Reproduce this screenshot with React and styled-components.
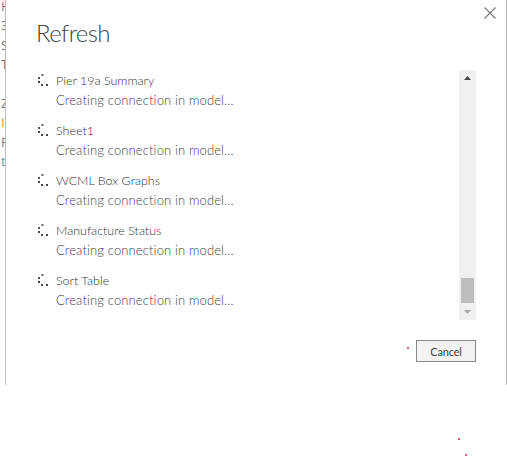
import React from "react";
import styled, { createGlobalStyle } from "styled-components";

const Global = createGlobalStyle`
  html, body { margin: 0; padding: 0; background: #fff; }
  body { font-family: "Lato", "Open Sans", sans-serif; }
`;

const Page = styled.div`
  position: relative;
  width: 507px;
  height: 456px;
  overflow: hidden;
  background: #fff;
`;

const BackgroundText = styled.div`
  position: absolute;
  left: 1px;
  top: -3px;
  width: 4px;
  overflow: hidden;
  font-family: "Open Sans", sans-serif;
  font-size: 13px;
  line-height: 19.4px;
`;

const BackLine = styled.div`
  height: 19.4px;
  color: ${(p) => p.$color || "#777"};
`;

const Dialog = styled.div`
  position: absolute;
  left: 5px;
  top: 0;
  width: 502px;
  height: 385px;
  box-sizing: border-box;
  border-left: 1px solid #bdbdbd;
  border-right: 1px solid #bdbdbd;
  background: #fff;
  padding: 16px 30px 0 30px;
  display: flex;
  flex-direction: column;
`;

const Title = styled.h1`
  margin: 0;
  font-weight: 300;
  font-size: 24px;
  letter-spacing: -0.6px;
  line-height: 34px;
  color: #444;
`;

const Close = styled.button`
  position: absolute;
  right: 10px;
  top: 7px;
  width: 12px;
  height: 12px;
  padding: 0;
  border: 0;
  background: none;
  display: block;
`;

const Glyph = styled.svg`
  display: block;
`;

const ListArea = styled.div`
  margin-top: 20px;
  display: flex;
  height: 250px;
`;

const List = styled.div`
  width: 424px;
  display: flex;
  flex-direction: column;
`;

const Item = styled.div`
  height: 50px;
  display: grid;
  grid-template-columns: 20px 1fr;
  grid-template-rows: 20px 20px;
  align-items: center;
`;

const SpinnerBox = styled.div`
  grid-row: 1;
  width: 12px;
  height: 12px;
`;

const Name = styled.div`
  font-size: 12.5px;
  font-weight: 300;
  color: #333;
  white-space: nowrap;
`;

const Status = styled.div`
  grid-column: 2;
  font-size: 13px;
  letter-spacing: 0.13px;
  font-weight: 300;
  color: #444;
  white-space: nowrap;
`;

const Track = styled.div`
  width: 17px;
  height: 250px;
  background: #f0f0f0;
  display: flex;
  flex-direction: column;
  align-items: center;
  justify-content: space-between;
  position: relative;
`;

const Arrow = styled.svg`
  width: 7px;
  height: 4px;
  display: block;
  margin: 6px 0;
`;

const Thumb = styled.div`
  position: absolute;
  left: 2px;
  right: 2px;
  top: 208px;
  height: 25px;
  background: #bdbdbd;
`;

const Footer = styled.div`
  margin-top: 20px;
  display: flex;
  justify-content: flex-end;
`;

const CancelButton = styled.button`
  width: 60px;
  height: 22px;
  box-sizing: border-box;
  border: 1px solid #8a8a8a;
  background: #f3f2f1;
  font-family: inherit;
  font-size: 11px;
  letter-spacing: -0.2px;
  color: #444;
  padding: 0;
`;

const Dot = styled.span`
  position: absolute;
  left: ${(p) => p.$x}px;
  top: ${(p) => p.$y}px;
  width: 2px;
  height: 2px;
  background: #e8244f;
  border-radius: 50%;
`;

const Spinner = () => (
  <SpinnerBox>
    <Glyph width="12" height="12" viewBox="0 0 12 12">
      <rect x="5.5" y="0" width="2" height="2" fill="#666" />
      <rect x="2" y="3" width="2" height="2" fill="#555" />
      <rect x="2" y="7" width="2" height="2" fill="#444" />
      <rect x="5" y="10" width="2" height="2" fill="#444" />
      <rect x="10" y="10" width="2" height="2" fill="#444" />
    </Glyph>
  </SpinnerBox>
);

const items = ["Pier 19a Summary", "Sheet1", "WCML Box Graphs", "Manufacture Status", "Sort Table"];
const back = [["H"], ["3"], ["S"], ["T"], [" "], ["Z"], ["I", "#c89a5a"], ["F"], ["t", "#5a9a9a"]];

export default function App() {
  return (
    <Page>
      <Global />
      <BackgroundText>
        {back.map(([t, c], i) => (
          <BackLine key={i} $color={c}>{t}</BackLine>
        ))}
      </BackgroundText>
      <Dialog>
        <Close aria-label="Close">
          <Glyph width="12" height="12" viewBox="0 0 12 12">
            <path d="M0.5 0.5L11.5 11.5M11.5 0.5L0.5 11.5" stroke="#777" strokeWidth="1.1" fill="none" />
          </Glyph>
        </Close>
        <Title>Refresh</Title>
        <ListArea>
          <List>
            {items.map((n) => (
              <Item key={n}>
                <Spinner />
                <Name>{n}</Name>
                <Status>Creating connection in model...</Status>
              </Item>
            ))}
          </List>
          <Track>
            <Arrow viewBox="0 0 7 4"><path d="M3.5 0L7 4H0Z" fill="#444" /></Arrow>
            <Thumb />
            <Arrow viewBox="0 0 7 4"><path d="M0 0H7L3.5 4Z" fill="#a6a6a6" /></Arrow>
          </Track>
        </ListArea>
        <Footer>
          <CancelButton>Cancel</CancelButton>
        </Footer>
      </Dialog>
      <Dot $x={407} $y={347} />
      <Dot $x={458} $y={438} />
      <Dot $x={465} $y={454} />
    </Page>
  );
}
